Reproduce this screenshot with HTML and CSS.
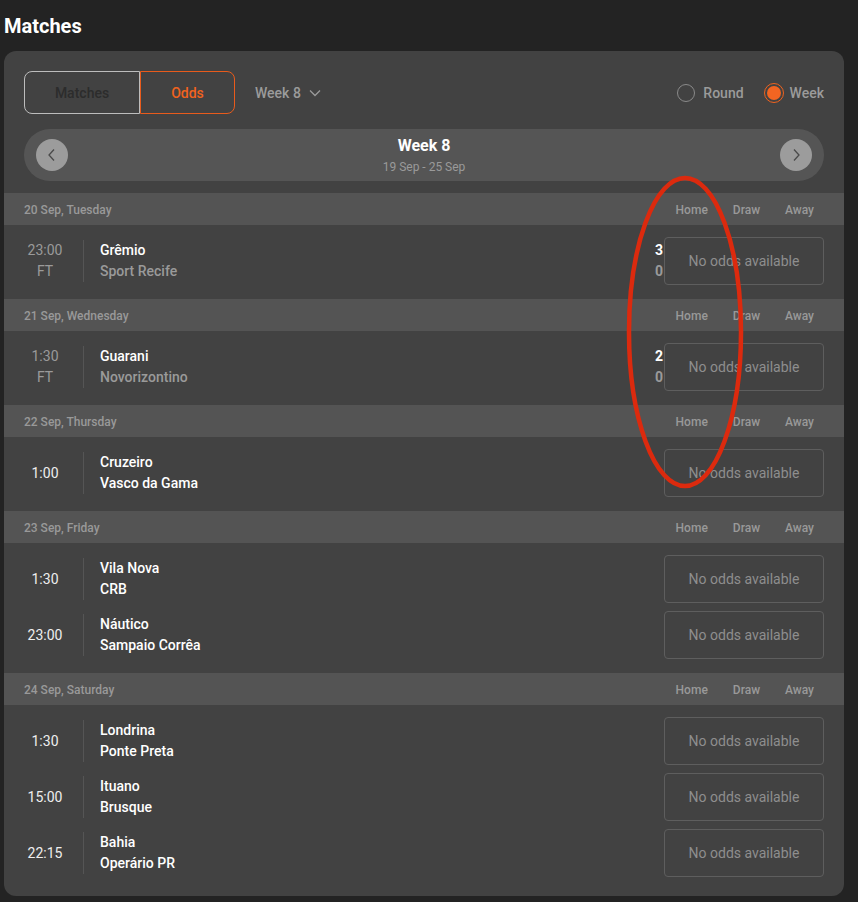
FILE: index.html
```html
<!DOCTYPE html>
<html lang="en">
<head>
<meta charset="utf-8">
<title>Matches</title>
<link rel="stylesheet" href="styles.css">
</head>
<body>
<div class="page">
  <h1 class="page-title">Matches</h1>
  <section class="card">
    <div class="toolbar">
      <div class="tabs">
        <button class="tab tab-matches">Matches</button>
        <button class="tab tab-odds">Odds</button>
      </div>
      <div class="week-select">
        <span>Week 8</span>
        <svg width="12" height="8" viewBox="0 0 12 8"><path d="M1 1.5 L6 6.5 L11 1.5" fill="none" stroke="#9a9a9a" stroke-width="1.3"/></svg>
      </div>
      <div class="radios">
        <label class="radio"><span class="radio-dot"></span>Round</label>
        <label class="radio"><span class="radio-dot checked"></span>Week</label>
      </div>
    </div>

    <div class="week-nav">
      <button class="nav-btn" aria-label="Previous week">
        <svg width="16" height="16" viewBox="0 0 16 16"><path d="M10 2.5 L5 8 L10 13.5" fill="none" stroke="#4a4a4a" stroke-width="1.3"/></svg>
      </button>
      <div class="week-info">
        <div class="week-title">Week 8</div>
        <div class="week-range">19 Sep - 25 Sep</div>
      </div>
      <button class="nav-btn" aria-label="Next week">
        <svg width="16" height="16" viewBox="0 0 16 16"><path d="M6 2.5 L11 8 L6 13.5" fill="none" stroke="#4a4a4a" stroke-width="1.3"/></svg>
      </button>
    </div>

    <div class="day">
      <div class="day-header"><span>20 Sep, Tuesday</span><div class="odds-labels"><span>Home</span><span>Draw</span><span>Away</span></div></div>
      <div class="day-matches">
        <div class="match">
          <div class="time finished"><span>23:00</span><span>FT</span></div>
          <div class="divider"></div>
          <div class="teams"><span>Grêmio</span><span class="dim">Sport Recife</span></div>
          <div class="score"><span>3</span><span class="dim">0</span></div>
          <div class="odds">No odds available</div>
        </div>
      </div>
    </div>

    <div class="day">
      <div class="day-header"><span>21 Sep, Wednesday</span><div class="odds-labels"><span>Home</span><span>Draw</span><span>Away</span></div></div>
      <div class="day-matches">
        <div class="match">
          <div class="time finished"><span>1:30</span><span>FT</span></div>
          <div class="divider"></div>
          <div class="teams"><span>Guarani</span><span class="dim">Novorizontino</span></div>
          <div class="score"><span>2</span><span class="dim">0</span></div>
          <div class="odds">No odds available</div>
        </div>
      </div>
    </div>

    <div class="day">
      <div class="day-header"><span>22 Sep, Thursday</span><div class="odds-labels"><span>Home</span><span>Draw</span><span>Away</span></div></div>
      <div class="day-matches">
        <div class="match">
          <div class="time"><span>1:00</span></div>
          <div class="divider"></div>
          <div class="teams"><span>Cruzeiro</span><span>Vasco da Gama</span></div>
          <div class="odds">No odds available</div>
        </div>
      </div>
    </div>

    <div class="day">
      <div class="day-header"><span>23 Sep, Friday</span><div class="odds-labels"><span>Home</span><span>Draw</span><span>Away</span></div></div>
      <div class="day-matches">
        <div class="match">
          <div class="time"><span>1:30</span></div>
          <div class="divider"></div>
          <div class="teams"><span>Vila Nova</span><span>CRB</span></div>
          <div class="odds">No odds available</div>
        </div>
        <div class="match">
          <div class="time"><span>23:00</span></div>
          <div class="divider"></div>
          <div class="teams"><span>Náutico</span><span>Sampaio Corrêa</span></div>
          <div class="odds">No odds available</div>
        </div>
      </div>
    </div>

    <div class="day">
      <div class="day-header"><span>24 Sep, Saturday</span><div class="odds-labels"><span>Home</span><span>Draw</span><span>Away</span></div></div>
      <div class="day-matches">
        <div class="match">
          <div class="time"><span>1:30</span></div>
          <div class="divider"></div>
          <div class="teams"><span>Londrina</span><span>Ponte Preta</span></div>
          <div class="odds">No odds available</div>
        </div>
        <div class="match">
          <div class="time"><span>15:00</span></div>
          <div class="divider"></div>
          <div class="teams"><span>Ituano</span><span>Brusque</span></div>
          <div class="odds">No odds available</div>
        </div>
        <div class="match">
          <div class="time"><span>22:15</span></div>
          <div class="divider"></div>
          <div class="teams"><span>Bahia</span><span>Operário PR</span></div>
          <div class="odds">No odds available</div>
        </div>
      </div>
    </div>
  </section>

  <svg class="annotation" width="858" height="902" viewBox="0 0 858 902" aria-hidden="true">
    <ellipse cx="685" cy="332" rx="56" ry="154" fill="none" stroke="#dc2a0e" stroke-width="4.5"/>
  </svg>
</div>
</body>
</html>
```

FILE: styles.css
```css
html, body {
  margin: 0;
  padding: 0;
  background: #232323;
  overflow: hidden;
}

body {
  font-family: Roboto, "Liberation Sans", sans-serif;
  color: #ffffff;
}

.page {
  position: relative;
  padding: 0 14px 0 4px;
  min-height: 902px;
  box-sizing: border-box;
}

.page-title {
  margin: 0;
  padding: 14px 0 13px;
  font-size: 20px;
  line-height: 24px;
  font-weight: 700;
  color: #ffffff;
}

.card {
  width: 840px;
  background: #424242;
  border-radius: 12px;
  padding: 20px 0 5px;
  box-sizing: border-box;
}

/* toolbar */
.toolbar {
  display: flex;
  align-items: center;
  height: 43px;
  padding: 0 20px;
}

.tabs {
  display: flex;
  height: 43px;
}

.tab {
  font-family: inherit;
  font-size: 14px;
  font-weight: 500;
  background: transparent;
  box-sizing: border-box;
  height: 43px;
  padding: 0;
  cursor: pointer;
}

.tab-matches {
  width: 116px;
  border: 1px solid #bdbdbd;
  border-radius: 8px 0 0 8px;
  color: #2c2c2c;
}

.tab-odds {
  width: 95px;
  border: 1px solid #e85b1c;
  border-radius: 0 8px 8px 0;
  color: #f0621e;
}

.week-select {
  margin-left: 20px;
  display: flex;
  align-items: center;
  gap: 8px;
  color: #9b9b9b;
  font-size: 14px;
  font-weight: 500;
}

.radios {
  margin-left: auto;
  display: flex;
  align-items: center;
  gap: 20px;
}

.radio {
  display: flex;
  align-items: center;
  gap: 8px;
  color: #9b9b9b;
  font-size: 14px;
  font-weight: 500;
}

.radio-dot {
  width: 18px;
  height: 18px;
  border: 1px solid #8a8a8a;
  border-radius: 50%;
  box-sizing: border-box;
}

.radio-dot.checked {
  width: 20px;
  height: 20px;
  border-color: #f0621e;
  padding: 2px;
  background: #f26522;
  background-clip: content-box;
  margin-right: -2px;
}

/* week navigation */
.week-nav {
  margin: 15px 20px 12px;
  height: 52px;
  border-radius: 26px;
  background: #555555;
  display: flex;
  align-items: center;
  padding: 0 12px;
}

.nav-btn {
  width: 32px;
  height: 32px;
  border-radius: 50%;
  background: #9c9c9c;
  border: none;
  padding: 0;
  display: flex;
  align-items: center;
  justify-content: center;
  flex-shrink: 0;
}

.week-info {
  flex: 1;
  align-self: stretch;
  padding-top: 7px;
  box-sizing: border-box;
  text-align: center;
}

.week-title {
  font-size: 16px;
  line-height: 20px;
  font-weight: 700;
  color: #ffffff;
}

.week-range {
  margin-top: 3px;
  font-size: 12px;
  line-height: 16px;
  color: #9a9a9a;
}

/* day groups */
.day-header {
  height: 32px;
  box-sizing: border-box;
  padding: 1px 20px 0;
  background: #545454;
  display: flex;
  align-items: center;
  justify-content: space-between;
  font-size: 12px;
  font-weight: 500;
  color: #999999;
}

.odds-labels {
  display: flex;
  gap: 25px;
  padding-right: 10px;
}

.day-matches {
  padding: 12px 0 14px;
  display: flex;
  flex-direction: column;
  gap: 8px;
}

.match {
  display: flex;
  align-items: center;
  height: 48px;
  padding: 0 20px;
}

.time {
  width: 42px;
  display: flex;
  flex-direction: column;
  align-items: center;
  font-size: 14px;
  line-height: 21px;
  color: #eeeeee;
}

.time.finished {
  color: #9a9a9a;
}

.divider {
  width: 1px;
  height: 42px;
  background: #555555;
  margin: 0 16px 0 17px;
}

.teams {
  flex: 1;
  display: flex;
  flex-direction: column;
  font-size: 14px;
  line-height: 21px;
  font-weight: 500;
  color: #ffffff;
}

.dim {
  color: #9a9a9a;
}

.score {
  display: flex;
  flex-direction: column;
  align-items: flex-end;
  font-size: 14px;
  line-height: 21px;
  font-weight: 700;
  color: #ffffff;
  padding-right: 1px;
}

.odds {
  width: 160px;
  height: 48px;
  box-sizing: border-box;
  border: 1px solid #5e5e5e;
  border-radius: 4px;
  display: flex;
  align-items: center;
  justify-content: center;
  color: #8e8e8e;
  font-size: 14px;
}

.annotation {
  position: absolute;
  top: 0;
  left: 0;
  pointer-events: none;
}
```
